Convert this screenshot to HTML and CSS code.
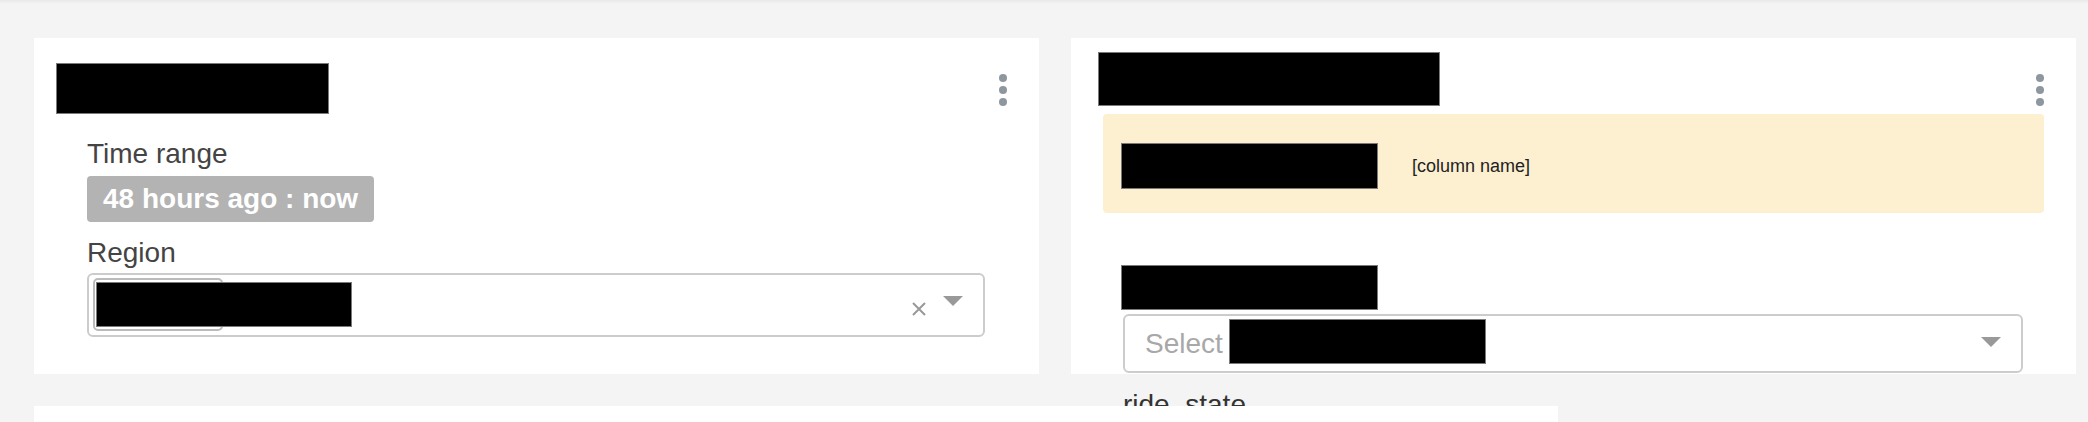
FILE: index.html
```html
<!DOCTYPE html>
<html lang="en">
<head>
<meta charset="utf-8">
<title>Dashboard filters</title>
<link rel="stylesheet" href="styles.css">
</head>
<body>
<main class="page">
  <div class="grid">
    <section class="card card-left">
      <div class="redact redact-title-left" aria-label="redacted title"></div>
      <button class="kebab" aria-label="More options"><span></span><span></span><span></span></button>
      <div class="filters filters-left">
        <div class="label">Time range</div>
        <span class="badge">48 hours ago : now</span>
        <div class="label label-region">Region</div>
        <div class="select select-multi">
          <div class="chip"><div class="redact redact-chip" aria-label="redacted value"></div></div>
          <div class="select-tools">
            <svg class="icon-clear" width="14" height="14" viewBox="0 0 14 14" aria-hidden="true"><path d="M1 1 L13 13 M13 1 L1 13" stroke="#999" stroke-width="2" fill="none"/></svg>
            <svg class="icon-caret" width="20" height="10" viewBox="0 0 20 10" aria-hidden="true"><polygon points="0,0 20,0 10,10" fill="#999"/></svg>
          </div>
        </div>
      </div>
    </section>

    <section class="card card-right">
      <div class="redact redact-title-right" aria-label="redacted title"></div>
      <button class="kebab" aria-label="More options"><span></span><span></span><span></span></button>
      <div class="notice">
        <div class="redact redact-notice" aria-label="redacted text"></div>
        <span class="notice-text">[column name]</span>
      </div>
      <div class="filters filters-right">
        <div class="redact redact-label" aria-label="redacted label"></div>
        <div class="select select-single">
          <span class="placeholder">Select</span>
          <div class="redact redact-placeholder" aria-label="redacted placeholder"></div>
          <div class="select-tools">
            <svg class="icon-caret" width="20" height="10" viewBox="0 0 20 10" aria-hidden="true"><polygon points="0,0 20,0 10,10" fill="#999"/></svg>
          </div>
        </div>
        <div class="label label-next">ride_state</div>
      </div>
    </section>

    <section class="card card-wide"></section>
  </div>
</main>
</body>
</html>
```

FILE: styles.css
```css
* { box-sizing: border-box; }

html, body {
  margin: 0;
  padding: 0;
}

body {
  background: #f4f4f4 linear-gradient(to bottom, #e9e9e9 0, #f4f4f4 4px) no-repeat;
  font-family: "Liberation Sans", Arial, Helvetica, sans-serif;
  color: #444;
  overflow: hidden;
}

.page {
  padding: 38px 12px 0 34px;
}

.grid {
  display: grid;
  grid-template-columns: repeat(4, 1fr);
  grid-auto-rows: 336px;
  gap: 32px;
}

.card {
  background: #fff;
  position: relative;
}

.card-left {
  grid-column: span 2;
  padding: 25px 22px 0 22px;
}

.card-right {
  grid-column: span 2;
  padding: 14px 32px 0 27px;
}

.card-wide {
  grid-column: span 3;
  z-index: 1;
}

.redact {
  background: #000;
  border: 1px solid #7a7a7a;
  flex-shrink: 0;
}

.redact-title-left { width: 273px; height: 51px; }
.redact-title-right { width: 342px; height: 54px; }

.kebab {
  position: absolute;
  top: 36px;
  right: 32px;
  width: 8px;
  padding: 0;
  border: 0;
  background: none;
  display: flex;
  flex-direction: column;
  gap: 4px;
}

.kebab span {
  display: block;
  width: 8px;
  height: 8px;
  border-radius: 50%;
  background: #8e979e;
}

.label {
  font-size: 28px;
  line-height: 32px;
  color: #444;
}

.filters-left {
  margin: 24px 32px 0 31px;
}

.badge {
  display: inline-block;
  margin-top: 6px;
  padding: 7px 16px;
  font-size: 28px;
  line-height: 32px;
  font-weight: bold;
  color: #fff;
  background: #b3b3b3;
  border-radius: 4px;
}

.label-region {
  margin-top: 15px;
}

.select {
  margin-top: 4px;
  border: 2px solid #ccc;
  border-radius: 6px;
  display: flex;
  align-items: center;
  background: #fff;
}

.select-multi {
  height: 64px;
  padding: 3px 20px 4px 4px;
}

.chip {
  width: 130px;
  height: 53px;
  border: 2px solid #bbb;
  border-radius: 5px;
  padding: 2px 1px;
  display: flex;
}

.redact-chip {
  width: 256px;
  height: 45px;
}

.select-tools {
  margin-left: auto;
  display: flex;
  align-items: center;
  gap: 17px;
}

.icon-clear { display: block; margin-top: 8px; }
.icon-caret { display: block; margin-bottom: 7px; }

.notice {
  margin: 8px 0 0 5px;
  height: 99px;
  padding: 29px 18px 24px;
  background: #fdf0d0;
  border-radius: 4px;
  display: flex;
  align-items: center;
  gap: 34px;
}

.redact-notice {
  width: 257px;
  height: 46px;
}

.notice-text {
  font-size: 18px;
  color: #222;
}

.filters-right {
  margin: 52px 21px 0 25px;
}

.redact-label {
  width: 257px;
  height: 45px;
  margin-left: -2px;
}

.select-single {
  height: 59px;
  padding: 0 20px 0 20px;
}

.placeholder {
  font-size: 28px;
  line-height: 32px;
  color: #a8a8a8;
  margin-right: 6px;
}

.redact-placeholder {
  width: 257px;
  height: 45px;
  margin-bottom: 4px;
}

.select-single .icon-caret {
  margin-bottom: 4px;
}

.label-next {
  margin-top: 16px;
  color: #333;
}
```
